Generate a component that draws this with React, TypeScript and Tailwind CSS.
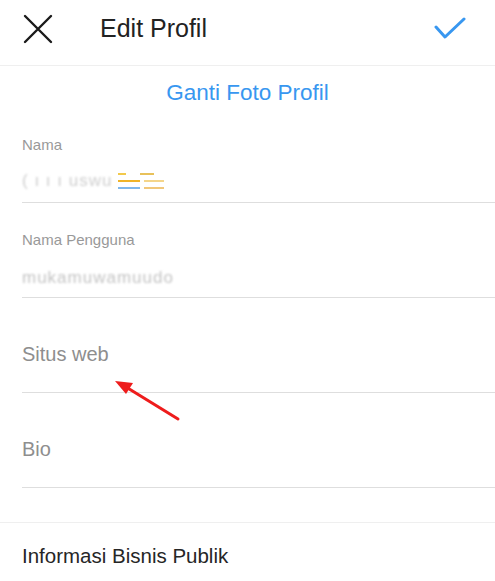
function Field({ label, children }: { label: string; children: React.ReactNode }) {
  return (
    <div className="ml-[22px] h-[95px] border-b border-[#dedede] pt-[29px]">
      <div className="text-[15px] leading-[15px] text-[#999999]">{label}</div>
      {children}
    </div>
  );
}

function Placeholder({ text }: { text: string }) {
  return (
    <div className="ml-[22px] h-[95px] border-b border-[#dedede] pt-[46px]">
      <div className="text-[20px] leading-[20px] text-[#8e8e8e]">{text}</div>
    </div>
  );
}

export default function App() {
  return (
    <div
      className="relative h-[581px] w-[495px] overflow-hidden bg-white"
      style={{ fontFamily: '"Liberation Sans", Arial, sans-serif' }}
    >
      <header className="flex h-[66px] items-center border-b border-[#efefef] pb-[8px]">
        <svg className="ml-[23px]" width="30" height="30" viewBox="0 0 30 30">
          <path d="M2 2 L28 28 M28 2 L2 28" stroke="#1a1a1a" strokeWidth="2.4" strokeLinecap="round" />
        </svg>
        <h1 className="ml-[47px] text-[25px] leading-[25px] text-[#222222]">Edit Profil</h1>
        <svg className="ml-auto mr-[28px]" width="34" height="24" viewBox="0 0 34 24">
          <path d="M3 10 L12 20 L31 2" fill="none" stroke="#3897f0" strokeWidth="3" strokeLinecap="round" strokeLinejoin="round" />
        </svg>
      </header>

      <div className="h-[42px] pt-[16px] text-center text-[22.5px] leading-[22px] text-[#3897f0]">
        Ganti Foto Profil
      </div>

      <Field label="Nama">
        <div className="mt-[17px] flex h-[24px] items-center">
          <span className="text-[17px] tracking-[1px] text-[#cfcfcf] blur-[1px]">( ı ı ı uswu</span>
          <div className="ml-[6px] flex flex-col gap-[5px]">
            <div className="flex gap-[14px]">
              <div className="h-[2px] w-[8px] bg-[#f2c94c]" />
              <div className="h-[2px] w-[14px] bg-[#e8c15a]" />
            </div>
            <div className="flex gap-[4px]">
              <div className="h-[2px] w-[22px] bg-[#f0b429]" />
              <div className="h-[2px] w-[20px] bg-[#f4d58a]" />
            </div>
            <div className="flex gap-[4px]">
              <div className="h-[2px] w-[22px] bg-[#7fb8ec]" />
              <div className="h-[2px] w-[20px] bg-[#f1c77a]" />
            </div>
          </div>
        </div>
      </Field>

      <Field label="Nama Pengguna">
        <div className="mt-[18px] h-[24px] text-[17px] tracking-[1px] text-[#c4c4c4] blur-[1px]">
          mukamuwamuudo
        </div>
      </Field>

      <Placeholder text="Situs web" />
      <Placeholder text="Bio" />

      <div className="mt-[34px] border-t border-[#efefef] pt-[23px]">
        <div className="ml-[22px] text-[20.5px] leading-[20px] text-[#262626]">
          Informasi Bisnis Publik
        </div>
      </div>

      <svg className="absolute left-0 top-0" width="495" height="581" viewBox="0 0 495 581">
        <line x1="178" y1="419" x2="126" y2="387" stroke="#ee1c1c" strokeWidth="3" strokeLinecap="round" />
        <polygon points="115,381 133,383 126,394" fill="#ee1c1c" />
      </svg>
    </div>
  );
}
